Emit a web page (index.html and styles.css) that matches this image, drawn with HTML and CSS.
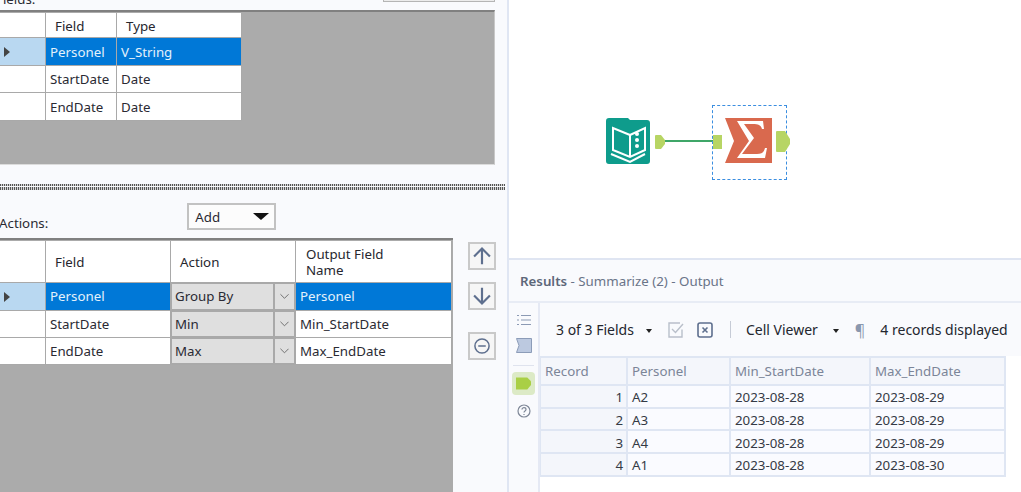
FILE: index.html
```html
<!DOCTYPE html>
<html lang="en">
<head>
<meta charset="utf-8">
<title>Summarize configuration</title>
<link rel="stylesheet" href="styles.css">
</head>
<body>
<div class="app">
  <section class="config">
    <div class="top-bar">
      <span class="fields-label">Fields:</span>
      <span class="cut-button"></span>
    </div>
    <div class="grid-well well-fields">
      <div class="grid fields-grid">
        <div class="cell rowhead"></div><div class="cell head">Field</div><div class="cell head">Type</div>
        <div class="cell rowhead current"><i class="pointer"></i></div><div class="cell sel">Personel</div><div class="cell sel">V_String</div>
        <div class="cell rowhead"></div><div class="cell">StartDate</div><div class="cell">Date</div>
        <div class="cell rowhead"></div><div class="cell">EndDate</div><div class="cell">Date</div>
      </div>
    </div>
    <div class="splitter"></div>
    <div class="actions-bar">
      <span class="actions-label">Actions:</span>
      <span class="add-drop">Add<i class="add-caret"></i></span>
    </div>
    <div class="actions-body">
      <div class="grid-well well-actions">
        <div class="grid actions-grid">
          <div class="cell rowhead"></div><div class="cell head head-low">Field</div><div class="cell head head-low">Action</div><div class="cell head head-multi">Output Field Name</div>
          <div class="cell rowhead current"><i class="pointer"></i></div><div class="cell sel">Personel</div><div class="cell combo"><span>Group By</span><svg class="chev" viewBox="0 0 10 6"><path d="M0.5 0.5 5 5 9.500 0.500"/></svg></div><div class="cell sel">Personel</div>
          <div class="cell rowhead"></div><div class="cell low">StartDate</div><div class="cell combo"><span class="low">Min</span><svg class="chev" viewBox="0 0 10 6"><path d="M0.5 0.5 5 5 9.500 0.500"/></svg></div><div class="cell low">Min_StartDate</div>
          <div class="cell rowhead"></div><div class="cell low">EndDate</div><div class="cell combo"><span class="low">Max</span><svg class="chev" viewBox="0 0 10 6"><path d="M0.5 0.5 5 5 9.500 0.500"/></svg></div><div class="cell low">Max_EndDate</div>
        </div>
      </div>
      <div class="side-buttons">
        <span class="sq"><svg viewBox="0 0 24 24"><path d="M12 22V3M2.500 12.500 12 3l9.500 9.500"/></svg></span>
        <span class="sq"><svg viewBox="0 0 24 24"><path d="M12 2v19M2.500 11.500 12 21l9.500-9.500"/></svg></span>
        <span class="sq sq-minus"><svg viewBox="0 0 24 24"><circle cx="12" cy="12" r="8.500"/><path d="M7.500 12h9"/></svg></span>
      </div>
    </div>
  </section>

  <section class="right">
    <div class="canvas">
      <svg class="node-book" viewBox="0 0 44 46">
        <path class="teal" d="M3 0h19l2 2h17a3 3 0 0 1 3 3v38a3 3 0 0 1-3 3H3a3 3 0 0 1-3-3V3a3 3 0 0 1 3-3z"/>
        <path class="book-line" d="M24 17 7 10v22l17 7 15-7V10l-15 7v22"/>
        <path class="book-line" d="M5 36l19 8 15-8"/>
        <circle cx="31" cy="16" r="2" fill="#fff"/><circle cx="31" cy="22" r="2" fill="#fff"/><circle cx="31" cy="28" r="2" fill="#fff"/>
      </svg>
      <svg class="anchor anchor-out" viewBox="0 0 10 14"><path d="M1 0h5l4 5v4l-4 5H1a1 1 0 0 1-1-1V1a1 1 0 0 1 1-1z"/></svg>
      <span class="wire"></span>
      <span class="node-select"></span>
      <svg class="anchor anchor-in" viewBox="0 0 9 14"><path d="M0 0h9v14H0z"/></svg>
      <svg class="node-sum" viewBox="0 0 47 45">
        <path class="sum-body" d="M0 0h47v45H0l9-22z"/>
        <path class="sum-mark" d="M12 3H38L39 11H37C36 7 33 6 28 6H19L29 20 17 36H32C37 36 39 34 40 30H42L40 40H12L24 23z"/>
      </svg>
      <svg class="anchor anchor-big" viewBox="0 0 14 21"><path d="M1 0h8l5 8v5l-5 8H1a1 1 0 0 1-1-1V1a1 1 0 0 1 1-1z"/></svg>
    </div>
    <div class="results">
      <header class="results-title"><b>Results</b> - Summarize (2) - Output</header>
      <div class="results-body">
        <aside class="rail">
          <svg class="rail-list" viewBox="0 0 14 12"><path d="M0 1.500h2M4 1.500h10M0 6h2M4 6h10M0 10.500h2M4 10.500h10"/></svg>
          <svg class="rail-flag" viewBox="0 0 16 15"><path d="M0.500 0.500h15v14H0.500l2.500-7z"/></svg>
          <span class="rail-sep"></span>
          <span class="rail-tile"><svg viewBox="0 0 16 13"><path d="M0 0h12l4 4v4l-4 5H0z"/></svg></span>
          <svg class="rail-help" viewBox="0 0 14 14"><circle cx="7" cy="7" r="6"/><path d="M5 5.500C5 3 9 3 9 5.500 9 7 7 7 7 8.500M7 10v1"/></svg>
        </aside>
        <div class="results-main">
          <div class="toolbar">
            <span class="t-fields">3 of 3 Fields</span><i class="mini-caret c1"></i>
            <svg class="t-check" viewBox="0 0 16 16"><path d="M14 7.500V15H1V1h11"/><path d="M4 7l3.500 3.500L15 2"/></svg>
            <svg class="t-cross" viewBox="0 0 16 16"><rect x="1" y="1" width="14" height="14" rx="2"/><path d="M5.500 5.500l5 5M10.500 5.500l-5 5"/></svg>
            <span class="t-sep"></span>
            <span class="t-viewer">Cell Viewer</span><i class="mini-caret c2"></i>
            <span class="t-pilcrow">¶</span>
            <span class="t-records">4 records displayed</span>
          </div>
          <div class="data">
            <div class="d head-d">Record</div><div class="d head-d">Personel</div><div class="d head-d">Min_StartDate</div><div class="d head-d">Max_EndDate</div>
            <div class="d num">1</div><div class="d">A2</div><div class="d">2023-08-28</div><div class="d">2023-08-29</div>
            <div class="d num">2</div><div class="d">A3</div><div class="d">2023-08-28</div><div class="d">2023-08-29</div>
            <div class="d num">3</div><div class="d">A4</div><div class="d">2023-08-28</div><div class="d">2023-08-29</div>
            <div class="d num">4</div><div class="d">A1</div><div class="d">2023-08-28</div><div class="d">2023-08-30</div>
          </div>
        </div>
      </div>
    </div>
  </section>
</div>
</body>
</html>
```
FILE: styles.css
```css
* { box-sizing: border-box; }
html, body { margin: 0; height: 100%; overflow: hidden; }
body { font: 13.300px/1 "Noto Sans", "Open Sans", sans-serif; color: #2a2a33; background: #fff; }
i { display: block; }

.app { display: flex; width: 1021px; height: 492px; }

/* left configuration pane */
.config { width: 509px; flex: none; height: 492px; background: #f9fafd; border-right: 2px solid #e0e6f3; display: flex; flex-direction: column; overflow: hidden; }
.top-bar { height: 10px; display: flex; justify-content: space-between; padding-right: 12px; overflow: hidden; flex: none; }
.fields-label { margin: -9px 0 0 -4px; line-height: 16px; }
.cut-button { width: 112px; height: 2px; background: #ececec; border: solid #b5b5b5; border-width: 0 1px 1px; }

.grid-well { background: #ababab; border-top: 2px solid #808080; }
.well-fields { width: 495px; height: 155px; padding-top: 1px; border-bottom: 1px solid #dcdcdc; border-right: 1px solid #c8c8c8; flex: none; }
.well-actions { width: 453px; height: 254px; padding-top: 1px; }

.grid { display: grid; gap: 1px; background: #a9a9a9; width: max-content; padding-right: 1px; padding-bottom: 1px; }
.fields-grid { grid-template-columns: 45px 70px 124px; grid-template-rows: 24px 27px 26px 27px; }
.actions-grid { grid-template-columns: 45px 124px 124px 155px; grid-template-rows: 41px 27px 26px 26px; }

.cell { background: #fff; display: flex; align-items: center; padding: 0 4px; white-space: nowrap; }
.fields-grid .cell { padding-top: 2px; }
.fields-grid .head { padding-top: 3px; }
.fields-grid .rowhead { padding-top: 0; }
.rowhead { padding: 0; }
.head { padding-left: 9px; color: #26262e; background: #fff; }
.head-low { padding-top: 3px; }
.head-multi { white-space: normal; line-height: 16px; padding-left: 10px; padding-right: 50px; }
.current { background: #b9d8f1; padding-left: 4px; }
.pointer { width: 0; height: 0; border-left: 6px solid #444; border-top: 5px solid transparent; border-bottom: 5px solid transparent; }
.sel { background: #0078d7; color: #e4f1fb; }
.combo { background: #dfdfdf; border: 1px solid #a9a9a9; padding: 0 0 0 3px; justify-content: space-between; }
.combo span { flex: 1; }
.low { padding-top: 2px; }
.chev { width: 21px; height: 100%; padding: 9px 5px 9px 5px; border-left: 2px solid #a9a9a9; fill: none; stroke: #666; stroke-width: 1; }

.splitter { height: 6px; margin-top: 19px; width: 505px; flex: none; background: linear-gradient(#f9fafd 0 0) 0 2px/100% 1px no-repeat, repeating-linear-gradient(90deg, #555 0 1px, #d5d5d5 1px 2px); }
.actions-bar { height: 48px; flex: none; display: flex; align-items: flex-end; }
.actions-label { margin: 0 0 7px -1px; line-height: 16px; }
.add-drop { width: 89px; height: 27px; margin: 0 0 8px 139px; border: 2px solid #c2c2c2; background: #fcfcfc; display: flex; align-items: center; justify-content: space-between; padding: 2px 5px 0 6px; }
.add-caret { width: 0; height: 0; margin-top: -2px; border-top: 7px solid #111; border-left: 8px solid transparent; border-right: 8px solid transparent; }

.actions-body { display: flex; flex: 1; }
.side-buttons { display: flex; flex-direction: column; margin: 4px 0 0 15px; }
.sq { width: 28px; height: 28px; border: 2px solid #c9c9c9; background: #f6f6f6; display: flex; padding: 2px; margin-bottom: 12px; }
.sq svg { fill: none; stroke: #5e6f8e; stroke-width: 2.600; }
.sq-minus { margin-top: 10px; }
.sq-minus svg { stroke-width: 1.800; }

/* right side */
.right { flex: 1; display: flex; flex-direction: column; min-width: 0; }
.canvas { height: 258px; position: relative; background: #fff; flex: none; }
.node-book, .node-sum, .anchor, .wire, .node-select { position: absolute; }
.node-book { left: 97px; top: 118px; width: 44px; height: 46px; }
.teal { fill: #0e9c8c; }
.book-line { fill: none; stroke: #fff; stroke-width: 2; }
.anchor path { fill: #b7d564; }
.anchor-out { left: 146px; top: 135px; width: 10px; height: 14px; }
.wire { left: 156px; top: 140px; width: 52px; height: 2px; background: #3fa668; }
.node-select { left: 203px; top: 105px; width: 75px; height: 75px; border: 1px dashed #3b8ee0; }
.anchor-in { left: 204px; top: 135px; width: 9px; height: 14px; }
.node-sum { left: 216px; top: 118px; width: 47px; height: 45px; }
.sum-body { fill: #d9694e; }
.sum-mark { fill: #fff; }
.anchor-big { left: 267px; top: 131px; width: 14px; height: 21px; }

.results { flex: 1; display: flex; flex-direction: column; border-top: 2px solid #dfe5f2; min-height: 0; }
.results-title { height: 43px; flex: none; background: #f9fafd; border-bottom: 2px solid #e8ecf5; padding: 13px 0 0 11px; color: #6a7488; line-height: 16px; }
.results-title b { color: #5d6779; font-weight: 600; }
.results-body { flex: 1; display: flex; min-height: 0; }

.rail { width: 31px; flex: none; background: #f9fafd; border-right: 2px solid #e5e9f4; display: flex; flex-direction: column; align-items: center; padding-top: 11px; }
.rail-list { width: 14px; height: 12px; fill: none; stroke: #8c9ab4; stroke-width: 1.200; }
.rail-flag { width: 16px; height: 15px; margin-top: 12px; fill: #bcc9e0; stroke: #8c9cb8; }
.rail-sep { width: 21px; height: 1px; background: #dfe3ee; margin-top: 12px; flex: none; }
.rail-tile { width: 23px; height: 23px; background: #dceac6; border-radius: 4px; margin-top: 6px; padding: 5px 4px; display: flex; flex: none; }
.rail-tile svg { width: 16px; height: 13px; fill: #a9cf45; }
.rail-help { width: 14px; height: 14px; margin-top: 9px; fill: none; stroke: #7e8797; stroke-width: 1.200; }

.results-main { flex: 1; display: flex; flex-direction: column; min-width: 0; background: #fff; }
.toolbar { height: 53px; flex: none; background: #f9fafd; display: flex; align-items: center; padding-left: 16px; font-size: 14px; color: #23262e; margin-bottom: 1px; }
.mini-caret { width: 0; height: 0; border-top: 4px solid #222; border-left: 3.500px solid transparent; border-right: 3.500px solid transparent; }
.c1 { margin: 2px 0 0 12px; }
.c2 { margin: 2px 0 0 15px; }
.t-check { width: 16px; height: 16px; margin-left: 16px; fill: none; stroke: #b9bfca; stroke-width: 1.400; }
.t-cross { width: 16px; height: 16px; margin-left: 13px; fill: none; stroke: #5e6f8e; stroke-width: 1.600; }
.t-sep { width: 1px; height: 17px; background: #c6cbd6; margin-left: 17px; }
.t-viewer { margin-left: 15px; }
.t-pilcrow { margin-left: 16px; color: #8a97ae; font-size: 16px; }
.t-records { margin-left: 15px; }

.data { display: grid; grid-template-columns: 85px 101px 138px 133px; grid-template-rows: 26px repeat(4, 20.670px); gap: 2px; width: max-content; padding: 2px 2px 2px 1px; background: #dfe6f3; margin-top: -1px; }
.d { background: #fafbff; display: flex; align-items: center; padding: 2px 3px 0 4px; line-height: 16px; color: #353a45; }
.head-d { background: #f4f6fb; color: #7b8598; padding: 0 3px 1px 4px; }
.num { justify-content: flex-end; background: #f4f6fb; }
```
